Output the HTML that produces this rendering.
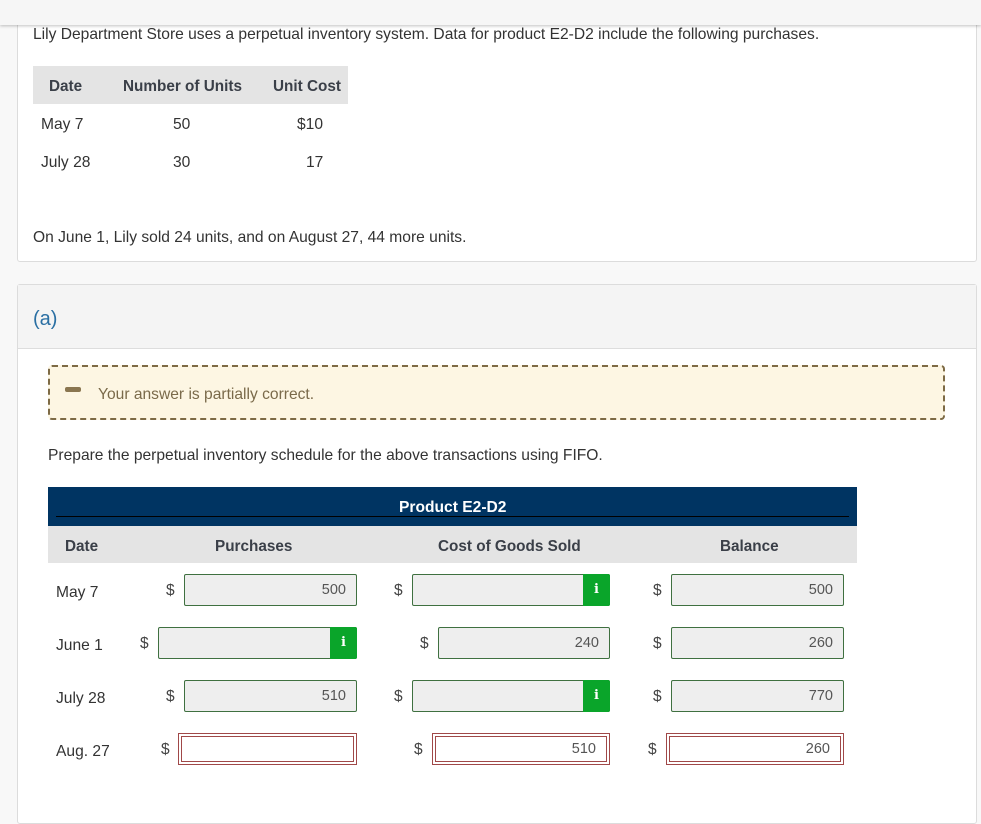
<!DOCTYPE html>
<html><head><meta charset="utf-8"><style>
*{box-sizing:border-box;margin:0;padding:0}
body{width:981px;height:805px;background:#f8f8f8;font-family:"Liberation Sans",sans-serif;color:#333;font-size:15.6px;position:relative;overflow:hidden}
.abs{position:absolute}
.top{left:0;top:0;width:981px;height:25px;background:#f6f6f6;box-shadow:0 1px 3px rgba(0,0,0,.25);z-index:2}
.card{background:#fff;border:1px solid #dcdcdc;border-radius:3px}
.t{position:absolute;white-space:nowrap;margin-top:2px}
.b{font-weight:bold;color:#3a3f48;font-size:15.3px}
.in{position:absolute;height:32px;background:#eee;border:1px solid #3f7040;border-radius:2px;text-align:right;padding-right:10px;line-height:31px;font-size:14.5px;color:#555}
.in .i{position:absolute;right:-1px;top:-1px;width:27px;height:32px;background:#0aa52a;border-radius:0 2px 2px 0;color:#fff;font-weight:bold;text-align:center;font-family:"DejaVu Serif",serif;font-size:13px;line-height:32px}
.red{position:absolute;height:32px;background:#fff;border:1px solid #a04848;padding:2px;font-size:14.5px;color:#555}
.red div{border:1px solid #a04848;height:100%;text-align:right;padding-right:10px;line-height:25px}
.d{position:absolute;font-size:15.5px;color:#444;margin-top:2px}
</style></head><body>
<div class="abs top"></div>
<div class="abs card" style="left:17px;top:10px;width:960px;height:252px"></div>
<div class="t" style="left:33px;top:24px">Lily Department Store uses a perpetual inventory system. Data for product E2-D2 include the following purchases.</div>
<div class="abs" style="left:33px;top:66px;width:315px;height:38px;background:#e4e4e4"></div>
<div class="t b" style="left:49px;top:76px">Date</div>
<div class="t b" style="left:123px;top:76px">Number of Units</div>
<div class="t b" style="left:273px;top:76px">Unit Cost</div>
<div class="t" style="left:41px;top:114px">May 7</div>
<div class="t" style="left:173px;top:114px">50</div>
<div class="t" style="left:297px;top:114px">$10</div>
<div class="t" style="left:41px;top:152px">July 28</div>
<div class="t" style="left:173px;top:152px">30</div>
<div class="t" style="left:306px;top:152px">17</div>
<div class="t" style="left:33px;top:227px">On June 1, Lily sold 24 units, and on August 27, 44 more units.</div>

<div class="abs card" style="left:17px;top:284px;width:960px;height:540px"></div>
<div class="abs" style="left:18px;top:285px;width:958px;height:64px;background:#f4f4f4;border-bottom:1px solid #ddd"></div>
<div class="t" style="left:33px;top:306px;font-size:20px;color:#2a6fa3">(a)</div>
<div class="abs" style="left:48px;top:365px;width:897px;height:55px;background:#fdf6e3;border:2px dashed #7d6a45;border-radius:4px"></div>
<div class="abs" style="left:65px;top:387px;width:16px;height:5px;background:#8a7650;border-radius:2px"></div>
<div class="t" style="left:98px;top:384px;color:#7a6a4a">Your answer is partially correct.</div>
<div class="t" style="left:48px;top:445px">Prepare the perpetual inventory schedule for the above transactions using FIFO.</div>

<div class="abs" style="left:48px;top:487px;width:809px;height:39px;background:#003462"></div>
<div class="abs" style="left:56px;top:516px;width:793px;height:1px;background:#000"></div>
<div class="t" style="left:399px;top:497px;color:#fff;font-weight:bold">Product E2-D2</div>
<div class="abs" style="left:48px;top:526px;width:809px;height:37px;background:#e4e4e4"></div>
<div class="t b" style="left:65px;top:536px">Date</div>
<div class="t b" style="left:215px;top:536px">Purchases</div>
<div class="t b" style="left:438px;top:536px">Cost of Goods Sold</div>
<div class="t b" style="left:720px;top:536px">Balance</div>

<div class="t" style="left:56px;top:582px">May 7</div>
<div class="t" style="left:56px;top:635px">June 1</div>
<div class="t" style="left:56px;top:688px">July 28</div>
<div class="t" style="left:56px;top:741px">Aug. 27</div>

<div class="d" style="left:166px;top:580px">$</div>
<div class="in" style="left:184px;top:574px;width:173px">500</div>
<div class="d" style="left:140px;top:633px">$</div>
<div class="in" style="left:158px;top:627px;width:199px"><span class="i">i</span></div>
<div class="d" style="left:166px;top:686px">$</div>
<div class="in" style="left:184px;top:680px;width:173px">510</div>
<div class="d" style="left:161px;top:739px">$</div>
<div class="red" style="left:178px;top:733px;width:179px"><div></div></div>

<div class="d" style="left:394px;top:580px">$</div>
<div class="in" style="left:412px;top:574px;width:198px"><span class="i">i</span></div>
<div class="d" style="left:420px;top:633px">$</div>
<div class="in" style="left:438px;top:627px;width:172px">240</div>
<div class="d" style="left:394px;top:686px">$</div>
<div class="in" style="left:412px;top:680px;width:198px"><span class="i">i</span></div>
<div class="d" style="left:414px;top:739px">$</div>
<div class="red" style="left:432px;top:733px;width:178px"><div>510</div></div>

<div class="d" style="left:653px;top:580px">$</div>
<div class="in" style="left:671px;top:574px;width:173px">500</div>
<div class="d" style="left:653px;top:633px">$</div>
<div class="in" style="left:671px;top:627px;width:173px">260</div>
<div class="d" style="left:653px;top:686px">$</div>
<div class="in" style="left:671px;top:680px;width:173px">770</div>
<div class="d" style="left:648px;top:739px">$</div>
<div class="red" style="left:666px;top:733px;width:178px"><div>260</div></div>
</body></html>
